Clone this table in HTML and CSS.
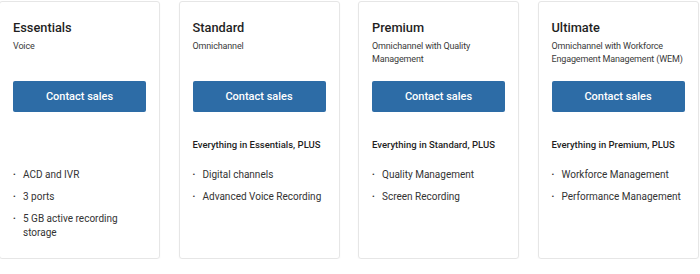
FILE: index.html
```
<!DOCTYPE html>
<html lang="en">
<head>
  <meta charset="UTF-8" />
  <title>Plans</title>
  <link rel="stylesheet" href="styles.css">
</head>
<body>
  <div class="plans">
    <div class="plan">
      <h2 class="plan-name">Essentials</h2>
      <p class="plan-desc">Voice</p>
      <button class="contact-btn">Contact sales</button>
      <p class="plus"></p>
      <ul class="features">
        <li>ACD and IVR</li>
        <li>3 ports</li>
        <li>5 GB active recording storage</li>
      </ul>
    </div>
    <div class="plan">
      <h2 class="plan-name">Standard</h2>
      <p class="plan-desc">Omnichannel</p>
      <button class="contact-btn">Contact sales</button>
      <p class="plus">Everything in Essentials, PLUS</p>
      <ul class="features">
        <li>Digital channels</li>
        <li>Advanced Voice Recording</li>
      </ul>
    </div>
    <div class="plan">
      <h2 class="plan-name">Premium</h2>
      <p class="plan-desc">Omnichannel with Quality Management</p>
      <button class="contact-btn">Contact sales</button>
      <p class="plus">Everything in Standard, PLUS</p>
      <ul class="features">
        <li>Quality Management</li>
        <li>Screen Recording</li>
      </ul>
    </div>
    <div class="plan">
      <h2 class="plan-name">Ultimate</h2>
      <p class="plan-desc">Omnichannel with Workforce Engagement Management (WEM)</p>
      <button class="contact-btn">Contact sales</button>
      <p class="plus">Everything in Premium, PLUS</p>
      <ul class="features">
        <li>Workforce Management</li>
        <li>Performance Management</li>
      </ul>
    </div>
  </div>
</body>
</html>
```

FILE: styles.css
```
body {
  margin: 0;
  background: #ffffff;
  font-family: Roboto, "Liberation Sans", sans-serif;
  color: #262626;
}
.plans {
  display: grid;
  grid-template-columns: repeat(4, 161px);
  column-gap: 18.5px;
  margin-left: -1px;
  padding-top: 1px;
}
.plan {
  height: 258px;
  box-sizing: border-box;
  padding: 17px 13px 0 13px;
  border: 1px solid #e6e6e6;
  border-radius: 3px;
  box-shadow: 0 1px 2px rgba(0, 0, 0, 0.04);
}
.plan-name {
  margin: 0;
  font-size: 12.8px;
  line-height: 18px;
  font-weight: 500;
  color: #1f1f1f;
}
.plan-desc {
  margin: 3px 0 15px 0;
  height: 26px;
  font-size: 9px;
  line-height: 13px;
  letter-spacing: -0.15px;
  color: #3a3a3a;
}
.contact-btn {
  display: block;
  width: 100%;
  height: 31px;
  border: none;
  border-radius: 2px;
  background: #2d6ca6;
  color: #ffffff;
  font-family: inherit;
  font-size: 11px;
  font-weight: 500;
  cursor: pointer;
}
.plus {
  margin: 26px 0 16px 0;
  min-height: 14px;
  font-size: 9.5px;
  line-height: 14px;
  font-weight: 500;
  color: #1f1f1f;
}
.features {
  list-style: none;
  margin: 0;
  padding: 0;
}
.features li {
  position: relative;
  padding-left: 10px;
  margin-bottom: 8px;
  font-size: 10px;
  line-height: 14px;
  color: #333333;
}
.features li::before {
  content: "•";
  position: absolute;
  left: 0;
  font-size: 8px;
}
```
